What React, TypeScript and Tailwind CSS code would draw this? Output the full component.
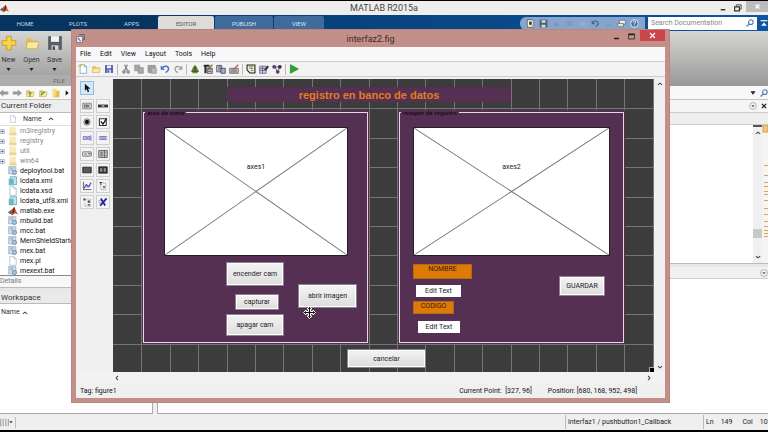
import type { ReactNode } from 'react';

const UI_FONT = "font-['Roboto','Noto_Sans',sans-serif]";

interface GlyphProps {
  children: ReactNode;
  className?: string;
}

function Glyph({ children, className = 'size-[10px]' }: GlyphProps) {
  return (
    <svg className={`shrink-0 ${className}`} viewBox="0 0 14 14" fill="none" aria-hidden="true">
      {children}
    </svg>
  );
}

const folder = (
  <>
    <path d="M2 3h4l1 2h5v7H2z" fill="#e3bd4e" />
    <path d="M3 6h10l-1.500 6H2z" fill="#fbe9a0" stroke="#c9a138" strokeWidth=".6" />
  </>
);
const disk = (
  <>
    <path d="M1.500 1.500h11v11h-11z" fill="#5559a8" />
    <path d="M4 2h6v4H4z" fill="#eef0fa" />
    <path d="M4 8h6v4.500H4z" fill="#c9cdeb" />
    <path d="M5 9h2v3H5z" fill="#3b3f85" />
  </>
);
const page = <path d="M2.500 1h6l3 3v9h-9z M8.500 1v3h3" fill="#fff" stroke="#a5b3bf" />;

type ToolItem = { label: string; icon: ReactNode } | 'sep';

const toolbar: ToolItem[] = [
  {
    label: 'New Figure',
    icon: (
      <>
        <path d="M3 1h6l3 3v9H3z M9 1v3h3" fill="#fff" stroke="#6b9cbd" />
        <path d="M3 0v5M.5 2.500h5" stroke="#e8b434" strokeWidth="1.500" />
      </>
    ),
  },
  { label: 'Open Figure', icon: folder },
  { label: 'Save Figure', icon: disk },
  'sep',
  {
    label: 'Cut',
    icon: (
      <g stroke="#8d8d8d" strokeWidth="2">
        <path d="M9 1L5 9M5 1l4 8" />
        <circle cx="4" cy="11" r="1.600" />
        <circle cx="10" cy="11" r="1.600" />
      </g>
    ),
  },
  {
    label: 'Copy',
    icon: (
      <g fill="#a8a8a8" stroke="#8f8f8f">
        <path d="M1 1.500h7v8H1z" />
        <path d="M6 5h7v8H6z" />
      </g>
    ),
  },
  {
    label: 'Paste',
    icon: (
      <>
        <path d="M1.500 2h10v10h-10z" fill="#a0a0a0" stroke="#8a8a8a" />
        <path d="M6 5.500h7V13H6z" fill="#b8b8b8" stroke="#8f8f8f" />
      </>
    ),
  },
  {
    label: 'Undo',
    icon: (
      <>
        <path d="M3 6c2-4 9-4 9 1 0 3-2 4-4 5" stroke="#4a6fc4" strokeWidth="2" />
        <path d="M1 2v6h6z" fill="#4a6fc4" />
      </>
    ),
  },
  {
    label: 'Redo',
    icon: (
      <>
        <path d="M11 6C9 2 3 3 3 7c0 2 1 4 4 5" stroke="#a0a0a0" strokeWidth="1.800" />
        <path d="M13 2v6H7z" fill="#a0a0a0" />
      </>
    ),
  },
  'sep',
  {
    label: 'Align Objects',
    icon: (
      <>
        <path d="M4 5l3-4 3 4 2 5-2 3H4l-2-3z" fill="#6d8a3a" />
        <path d="M2 9h10v2H2z" fill="#3f5a2b" />
        <path d="M6 4h2v4H6z" fill="#2e4420" />
      </>
    ),
  },
  {
    label: 'Menu Editor',
    icon: (
      <>
        <path d="M1 1h8v3H1zM2 4h3v9H2z" fill="#2d2d2d" />
        <path d="M6 6h7v7H6z" fill="#d8d8d8" stroke="#2d2d2d" />
        <path d="M7 8h5M7 10.500h5" stroke="#444" />
        <path d="M13 1L7 7" stroke="#66663a" strokeWidth="1.800" />
      </>
    ),
  },
  {
    label: 'Tab Order Editor',
    icon: (
      <>
        <path d="M1 2h7v9H1z" fill="#cfd2e2" stroke="#2f3348" />
        <path d="M3 4h4M3 6h4M3 8.500h4" stroke="#333a66" />
        <path d="M7 6h6v7H7z" fill="#a7accb" stroke="#2f3348" />
      </>
    ),
  },
  {
    label: 'Toolbar Editor',
    icon: (
      <>
        <path d="M1 6h12v7H1z" fill="#bdbdbd" stroke="#555" />
        <path d="M3 8.500h8M3 11h8" stroke="#5d5d5d" />
        <path d="M13 1L6 8" stroke="#b2625a" strokeWidth="1.800" />
      </>
    ),
  },
  'sep',
  {
    label: 'Editor',
    icon: (
      <>
        <path d="M1.500 1.500h11v11h-7l-4-4z" fill="#f3f0c8" stroke="#222" strokeWidth="1.500" />
        <path d="M4 4h6M5 6.500h5M7 9h3" stroke="#555" />
      </>
    ),
  },
  {
    label: 'Property Inspector',
    icon: (
      <>
        <path d="M1 3h9v10H1z" fill="#d5d7ea" stroke="#4b4f73" />
        <path d="M1 6h9M1 9h9M5 3v10" stroke="#4b4f73" />
        <path d="M7 8l5-6 2 2-4 5z" fill="#333" />
      </>
    ),
  },
  {
    label: 'Object Browser',
    icon: (
      <>
        <path d="M3 4h8M4 4l4 7 3-7" stroke="#333" />
        <circle cx="3" cy="4" r="2.600" fill="#4d3c73" />
        <circle cx="11" cy="4" r="2.600" fill="#2f2f45" />
        <circle cx="8" cy="11" r="2.600" fill="#6d3a5f" />
      </>
    ),
  },
  'sep',
  { label: 'Run Figure', icon: <path d="M2 1l11 6-11 6z" fill="#26a82c" stroke="#168a1e" /> },
];

const palette: { label: string; icon: ReactNode }[] = [
  {
    label: 'Push Button',
    icon: (
      <>
        <path d="M1 3h12v8H1z" fill="#d4d4d4" stroke="#6b6b6b" />
        <path d="M3.500 5.500h3v3h-3zM8 5v4M10.500 5L8.500 7l2 2" stroke="#444" />
      </>
    ),
  },
  {
    label: 'Slider',
    icon: (
      <>
        <path d="M0 5h14v4H0z" fill="#333" />
        <path d="M5 6h4v2H5z" fill="#bbb" />
      </>
    ),
  },
  {
    label: 'Radio Button',
    icon: (
      <>
        <circle cx="7" cy="7" r="4.500" fill="#ddd" stroke="#555" />
        <circle cx="7" cy="7" r="3" fill="#111" />
      </>
    ),
  },
  {
    label: 'Check Box',
    icon: (
      <>
        <path d="M2 2.500h9.500V12H2z" fill="#fff" stroke="#333" strokeWidth="1.500" />
        <path d="M4 6l3 4 5-8" stroke="#111" strokeWidth="1.800" />
      </>
    ),
  },
  {
    label: 'Edit Text',
    icon: (
      <>
        <path d="M1 4h12v6H1z" fill="#cfccf0" />
        <path d="M2 5h4v4H2zM8 5h3v4H8zM12.500 3v8" stroke="#6a66bd" />
      </>
    ),
  },
  {
    label: 'Static Text',
    icon: (
      <>
        <path d="M1 4h12v6H1z" fill="#cfccf0" />
        <path d="M2 5h10M2 9h10M4 5v4M7 5v4M10 5v4" stroke="#6a66bd" />
      </>
    ),
  },
  {
    label: 'Pop-up Menu',
    icon: (
      <>
        <rect x=".5" y="4" width="13" height="6" rx="1" fill="#e2e2e2" stroke="#555" />
        <path d="M3 7h4M9 6h3l-1.500 2z" stroke="#555" />
      </>
    ),
  },
  {
    label: 'Listbox',
    icon: (
      <>
        <path d="M1 2h12v10H1z" fill="#c4c4c4" stroke="#4a4a4a" />
        <path d="M3 4.500h4M3 7h4M3 9.500h4M9 2v10M11 4v1M11 9v1" stroke="#444" />
      </>
    ),
  },
  {
    label: 'Toggle Button',
    icon: (
      <>
        <path d="M1 3h12v8H1z" fill="#4a4a4a" stroke="#222" />
        <path d="M3 5.500h8M3 8.500h8" stroke="#909090" strokeDasharray="2 1" />
      </>
    ),
  },
  {
    label: 'Table',
    icon: (
      <>
        <path d="M1 2.500h12v9H1z" fill="#333" stroke="#222" />
        <path d="M3 5h3v4H3zM8 5h3v4H8z" fill="#c4c4c4" />
        <path d="M3 7h8" stroke="#333" />
      </>
    ),
  },
  {
    label: 'Axes',
    icon: (
      <>
        <path d="M2 1v11h11" stroke="#333" />
        <path d="M3 10l3-5 3 3 4-6" stroke="#3a3ab8" strokeWidth="1.500" />
        <path d="M4 5l3 4 5-2" stroke="#6c6cd0" />
      </>
    ),
  },
  {
    label: 'Panel',
    icon: (
      <>
        <path d="M2 2h4M4 2v4" stroke="#444" strokeWidth="1.500" />
        <path d="M7 3h4v9H4V7" stroke="#8a8a8a" strokeDasharray="2 1" />
        <path d="M7 7h3v3H7z" fill="#777" />
      </>
    ),
  },
  {
    label: 'Button Group',
    icon: (
      <>
        <path d="M2 2h3v3H2zM8 5h3v3H8zM8 10h3v2H8z" fill="#444" />
        <path d="M6 3h6v10H4V7" stroke="#999" strokeDasharray="2 1" />
      </>
    ),
  },
  {
    label: 'ActiveX Control',
    icon: (
      <>
        <path d="M4 2l6 10M12 2L3 12" stroke="#23239c" strokeWidth="2.500" />
        <path d="M1 5h3M1 8h3" stroke="#777" />
      </>
    ),
  },
];

const script = (
  <>
    <path d="M1 1h10v10H1z" fill="#d5e3ef" stroke="#86a2bb" />
    <path d="M3 3h5M3 5.500h4" stroke="#6e8fb0" />
    <circle cx="9" cy="9" r="3" fill="#a9bfd4" stroke="#64819d" />
  </>
);
const xml = (
  <>
    <path d="M3 1h9v11H3z" fill="#bfe3ea" stroke="#5ca3b4" />
    <path d="M1 4h7v9H1z" fill="#6ab8c8" />
  </>
);
const membrane = (
  <>
    <path d="M0 9l4-3 5-5 1 4 4 7-4-2-4 3z" fill="#c5502a" />
    <path d="M0 9l4-3 2 3-2 2z" fill="#3b6fa5" />
    <path d="M9 1l1 4-3 6-1-2z" fill="#6e1d16" />
  </>
);
const paleFolder = (
  <>
    <path d="M2 1h9v12H2z" fill="#f7eac0" />
    <path d="M2 9h10v4H2z" fill="#eed990" />
  </>
);

const files: { name: string; icon: ReactNode; dir?: boolean }[] = [
  { name: 'm3iregistry', icon: paleFolder, dir: true },
  { name: 'registry', icon: paleFolder, dir: true },
  { name: 'util', icon: paleFolder, dir: true },
  { name: 'win64', icon: paleFolder, dir: true },
  { name: 'deploytool.bat', icon: script },
  { name: 'lcdata.xml', icon: xml },
  { name: 'lcdata.xsd', icon: page },
  { name: 'lcdata_utf8.xml', icon: xml },
  { name: 'matlab.exe', icon: membrane },
  { name: 'mbuild.bat', icon: script },
  { name: 'mcc.bat', icon: script },
  { name: 'MemShieldStarter.bat', icon: script },
  { name: 'mex.bat', icon: script },
  { name: 'mex.pl', icon: page },
  { name: 'mexext.bat', icon: script },
];

const tabs = [
  { name: 'HOME', look: 'w-[50px] bg-[#06365f] text-[#c3d3e2]' },
  { name: 'PLOTS', look: 'w-[54px] bg-[#06365f] text-[#c3d3e2]' },
  { name: 'APPS', look: 'w-[51px] bg-[#06365f] text-[#c3d3e2]' },
  { name: 'EDITOR', look: 'w-[56px] bg-[#dcdcda] text-[#555]' },
  { name: 'PUBLISH', look: 'w-[58px] bg-[#3f6c9c] text-[#dbe6f1]' },
  { name: 'VIEW', look: 'w-[50px] bg-[#3f6c9c] text-[#dbe6f1]' },
];

// Vertical position of each analyzer message in the strip beside the editor
const warnings = [40, 50, 57, 61, 66, 69, 75, 83, 89, 96, 101, 105, 108, 111];

function Chevron({ d }: { d: string }) {
  return (
    <Glyph className="size-[6px]">
      <path d={d} stroke="#444" strokeWidth="2.500" />
    </Glyph>
  );
}

function PanelMenu() {
  return (
    <button aria-label="Panel menu" className="flex">
      <Glyph className="size-[8px]">
        <circle cx="7" cy="7" r="6" fill="#f5f5f5" stroke="#888" />
        <path d="M4 5.500h6L7 9z" fill="#555" />
      </Glyph>
    </button>
  );
}

function TitleBar() {
  return (
    <header className="grid h-[15px] grid-cols-[1fr_auto_1fr] items-center border-t border-black bg-[#efeeec]">
      <Glyph className="size-[9px]">{membrane}</Glyph>
      <h1 className="text-[9px] leading-[14px] text-[#444]">MATLAB R2015a</h1>
      <div className="flex h-full items-center justify-end">
        <button aria-label="Minimize" className="flex w-[14px] justify-center">
          <Glyph className="size-[8px]">
            <path d="M3 10h8" stroke="#333" strokeWidth="2.500" />
          </Glyph>
        </button>
        <button aria-label="Restore" className="flex w-[16px] justify-center">
          <Glyph className="size-[8px]">
            <path d="M4 4V1.500h8.500V9H10" stroke="#333" strokeWidth="1.500" />
            <path d="M1 5h8.500v7H1z" stroke="#333" strokeWidth="2" />
          </Glyph>
        </button>
        <button aria-label="Close" className="flex h-[11px] w-[22px] items-center justify-center self-start bg-[#bcbcbc]">
          <Glyph className="size-[7px]">
            <path d="M3 3l8 8M11 3l-8 8" stroke="#fff" strokeWidth="2.500" />
          </Glyph>
        </button>
      </div>
    </header>
  );
}

function SearchIcon() {
  return (
    <Glyph className="size-[8px]">
      <circle cx="8.500" cy="5.500" r="4" stroke="#4578b0" strokeWidth="1.800" />
      <path d="M6 8.500L1 13" stroke="#4578b0" strokeWidth="2.200" />
    </Glyph>
  );
}

function TabStrip() {
  return (
    <nav className="flex h-[16px] items-end bg-linear-to-r from-[#053360] to-[#0d55a0]">
      {tabs.map((tab) => (
        <button
          key={tab.name}
          className={`mr-px h-[15px] shrink-0 rounded-t-xs text-center text-[6px] leading-[15px] ${tab.look}`}
        >
          {tab.name}
        </button>
      ))}
      <div className="ml-auto flex h-[13px] shrink-0 items-center gap-[4px] self-center rounded-l-md bg-[#87a5cc] px-[6px]">
        <Glyph className="size-[9px]">
          <path d="M2 1h8l2 3v9H2z" fill="#f1efe3" stroke="#35465c" />
          <path d="M5 4h4v5H5z" fill="#31363d" />
          <path d="M8 9l5 3" stroke="#c9a538" strokeWidth="2" />
        </Glyph>
        <Glyph className="size-[9px]">
          <path d="M1 1h12v12H1z" fill="#53606e" />
          <path d="M4 2h6v4H4zM4 9h6v4H4z" fill="#d6dce2" />
        </Glyph>
        <Glyph className="size-[9px]">
          <path d="M7 3l4 8H3z" fill="#7793b8" />
        </Glyph>
        <Glyph className="size-[9px]">
          <path d="M3 3h8v8H3z" fill="#7d9abf" />
        </Glyph>
        <Glyph className="size-[9px]">
          <path d="M3 4h8v7H3z" fill="#93aecf" />
        </Glyph>
        <Glyph className="size-[9px]">
          <path d="M3 5c3-4 9-1 8 3l-3 4" stroke="#41699d" strokeWidth="2" />
          <path d="M1 2v6h6z" fill="#41699d" />
        </Glyph>
        <Glyph className="size-[9px]">
          <path d="M4 10h7" stroke="#7793b8" strokeWidth="2" />
        </Glyph>
        <Glyph className="size-[9px]">
          <path d="M4 2h9v6H4z" fill="#f2f2ea" stroke="#55606c" />
          <path d="M1 7h9v5H1z" fill="#e8e4cc" stroke="#55606c" />
        </Glyph>
        <Glyph className="size-[9px]">
          <circle cx="7" cy="7" r="6" fill="#4472ae" stroke="#e6eef7" strokeWidth="1.500" />
          <path d="M5 5.500c0-3 4-2.500 4-.5C9 6.500 7 6.500 7 8.500M7 10v1" stroke="#fff" strokeWidth="1.500" />
        </Glyph>
      </div>
      <label className="ml-[3px] flex h-[13px] w-[109px] shrink-0 items-center self-center bg-white px-[3px]">
        <input
          type="search"
          aria-label="Search Documentation"
          placeholder="Search Documentation"
          className="min-w-0 flex-1 text-[7px] leading-[13px] outline-none placeholder:text-[#888]"
        />
        <SearchIcon />
      </label>
      <button aria-label="Collapse toolstrip" className="flex h-full w-[11px] items-center justify-end">
        <Glyph className="size-[8px]">
          <path d="M1 3h12" stroke="#fff" strokeWidth="2" />
          <path d="M2 12l5-6 5 6z" fill="#fff" />
        </Glyph>
      </button>
    </nav>
  );
}

function RibbonButton({ label, children }: { label: string; children: ReactNode }) {
  return (
    <button className="flex w-[23px] flex-col items-center text-[7px] leading-[10px] text-[#333]">
      <Glyph className="mb-[4px] size-[16px]">{children}</Glyph>
      {label}
      <Glyph className="mt-[2px] size-[5px]">
        <path d="M1 3h12l-6 8z" fill="#222" />
      </Glyph>
    </button>
  );
}

function Ribbon() {
  return (
    <section className="flex h-[55px] flex-col bg-linear-to-b from-[#d6d6d4] to-[#989898]">
      <div className="-ml-[3px] flex flex-1 pt-[4px]">
        <RibbonButton label="New">
          <path d="M5 1h4v4h4v4H9v4H5V9H1V5h4z" fill="#f6d549" stroke="#c79a22" strokeWidth=".8" />
        </RibbonButton>
        <RibbonButton label="Open">{folder}</RibbonButton>
        <RibbonButton label="Save">
          <path d="M1 1h12v12H1z" fill="#5a5f66" />
          <path d="M3.500 1h7v5h-7z" fill="#f3f3f3" />
          <path d="M4 9h6v4H4z" fill="#d5d5d5" />
          <path d="M5 10h2v3H5z" fill="#444" />
        </RibbonButton>
      </div>
      <p className="h-[11px] w-[118px] bg-[#acacac] text-center text-[6px] leading-[11px] text-[#666]">FILE</p>
    </section>
  );
}

function AddressBar() {
  return (
    <div className="flex h-[14px] items-center gap-[3px] border-b border-[#c4c4c4] bg-[#f8f8f8]">
      <div className="-ml-px flex items-center gap-[3px]">
        <Glyph>
          <path d="M0 7l6-5v3h7v4H6v3z" fill="#999" />
        </Glyph>
        <Glyph>
          <path d="M14 7L8 2v3H1v4h7v3z" fill="#999" />
        </Glyph>
        <Glyph>
          {folder}
          <path d="M7 12V6M5 8l2-2 2 2" stroke="#3b7a35" strokeWidth="1.300" />
        </Glyph>
        <Glyph>
          {folder}
          <path d="M4 10l5-5" stroke="#4b9a45" strokeWidth="2" />
        </Glyph>
        <Glyph>
          <path d="M2 1h6v12H2z" fill="#f5dd85" />
          <path d="M8 4h4v9H5z" fill="#e4bf4f" />
        </Glyph>
        <Glyph className="size-[6px]">
          <path d="M4 1l7 6-7 6z" fill="#111" />
        </Glyph>
      </div>
      <div className="ml-auto flex items-center gap-[4px]">
        <Glyph className="size-[6px]">
          <path d="M1 3h12l-6 8z" fill="#222" />
        </Glyph>
        <SearchIcon />
      </div>
    </div>
  );
}

function Sidebar() {
  return (
    <aside className="flex w-[153px] shrink-0 flex-col border-r border-b border-[#aaa] bg-white">
      <h2 className="h-[13px] border-b border-[#bbb] bg-[#eeeeee] pl-[1px] text-[8px] leading-[12px] text-[#333]">
        Current Folder
      </h2>
      <div className="flex h-[13px] shrink-0 items-center gap-[6px] border-b border-[#ddd] pl-[9px] text-[7px] text-[#333]">
        <Glyph className="size-[8px]">{page}</Glyph>
        <span>Name</span>
        <Chevron d="M2 9l5-4 5 4" />
      </div>
      <ul className="h-[149px] shrink-0 overflow-hidden">
        {files.map((file) => (
          <li key={file.name} className="flex h-[10px] items-center text-[7px] leading-[10px]">
            <span className="flex w-[8px]">
              {file.dir && (
                <Glyph className="size-[5px]">
                  <path d="M1 1h11v12H1z" stroke="#8aa0b8" strokeWidth="2" />
                  <path d="M3 7h7M7 4v6" stroke="#446" strokeWidth="2" />
                </Glyph>
              )}
            </span>
            <Glyph className="mr-[2px] size-[10px]">{file.icon}</Glyph>
            <span className={file.dir ? 'text-[#888]' : 'whitespace-nowrap text-[#111]'}>{file.name}</span>
          </li>
        ))}
      </ul>
      <h2 className="h-[12px] border-t border-[#888] bg-[#f7f7f7] text-[7px] leading-[11px] text-[#777]">Details</h2>
      <div className="h-[4px] border-t border-[#bbb] bg-[#e6e6e6]" />
      <h2 className="h-[13px] border-b border-[#bbb] bg-[#eaeaea] pl-[1px] text-[8px] leading-[13px] text-[#333]">
        Workspace
      </h2>
      <div className="flex h-[17px] items-center gap-[2px] pl-[1px] text-[7px] text-[#333]">
        <span>Name</span>
        <Chevron d="M2 9l5-4 5 4" />
      </div>
    </aside>
  );
}

function EditorArea() {
  return (
    <section className="flex min-w-0 flex-1 flex-col border-b border-l border-[#aaa] bg-white">
      <div className="flex h-[13px] items-center justify-end gap-[4px] border-b border-[#ccc] bg-[#f5f5f5] pr-[1px]">
        <PanelMenu />
        <button aria-label="Close editor" className="flex">
          <Glyph className="size-[6px]">
            <path d="M2 2l10 10M12 2L2 12" stroke="#222" strokeWidth="3" />
          </Glyph>
        </button>
      </div>
      <div className="h-[12px] border-b border-[#ccc] bg-[#eeeeee]" />
      <div className="flex h-[138px] justify-end">
        <div className="flex w-[9px] flex-col items-center border-t-2 border-[#555] bg-[#f0f0f0] py-[3px]">
          <Chevron d="M2 9l5-4 5 4" />
          <div className="mt-auto mb-[16px] h-[9px] w-full bg-[#c9c9c9]" />
          <Chevron d="M2 5l5 4 5-4" />
        </div>
        <svg className="h-full w-[6px] bg-[#f4f4f4]" aria-hidden="true">
          <rect x="1" y="0" width="5" height="7" fill="#f1c583" stroke="#d79c45" />
          {warnings.map((y) => (
            <rect key={y} x="2" y={y} width="4" height="1" fill="#e3a24c" />
          ))}
        </svg>
      </div>
      <div className="h-[4px] border-t border-[#bbb] bg-[#e8e8e8]" />
      <div className="flex h-[12px] items-center justify-end border-b border-[#ccc] bg-[#f1f1f1]">
        <PanelMenu />
      </div>
    </section>
  );
}

function StatusBar() {
  return (
    <footer className="flex h-[18px] shrink-0 items-center border-b-2 border-black bg-[#efefef] text-[7px] leading-[14px] text-[#222]">
      <Glyph className="size-[9px]">
        <path d="M1 1v12M5 1v12M9 1v12M13 1v12" stroke="#aaa" strokeWidth="2" />
      </Glyph>
      <span className="flex h-[11px] items-center border-r border-[#bbb] pr-[2px]">
        <Glyph className="size-[4px]">
          <path d="M1 4h12l-6 7z" fill="#333" />
        </Glyph>
      </span>
      <div className="ml-auto w-[138px] border-l border-[#bbb] pl-[2px]">interfaz1 / pushbutton1_Callback</div>
      <div className="flex w-[65px] gap-[7px] border-l border-[#bbb] pl-[2px]">
        <span>Ln</span>
        <span>149</span>
        <span className="ml-[3px]">Col</span>
        <span>10</span>
      </div>
    </footer>
  );
}

function Axes({ name, className }: { name: string; className: string }) {
  return (
    <div className={`absolute border border-[#222] bg-white ${className}`}>
      <svg className="size-full" viewBox="0 0 100 100" preserveAspectRatio="none" aria-hidden="true">
        <path d="M0 0L100 100M100 0L0 100" stroke="#777" vectorEffect="non-scaling-stroke" />
      </svg>
      <span className="absolute inset-x-0 top-[34px] text-center text-[7px] leading-[10px] text-[#222]">{name}</span>
    </div>
  );
}

function GuiButton({ label, className }: { label: string; className: string }) {
  return (
    <button
      className={`absolute border border-white bg-linear-to-b from-[#f3f3f3] to-[#dedede] text-center text-[7px] leading-[10px] text-[#222] outline outline-[#8d8090] ${className}`}
    >
      {label}
    </button>
  );
}

function Panel({ title, className, children }: { title: string; className: string; children: ReactNode }) {
  return (
    <section className={`absolute h-[234px] w-[227px] bg-[#553052] p-px pt-[2px] ${className}`}>
      <div className="h-full border border-[#e6d8e4]" />
      <h3 className="absolute top-0 left-[3px] bg-[#553052] px-[2px] font-['Liberation_Sans',sans-serif] text-[6px] leading-[7px] font-bold text-[#1d0a1d]">
        {title}
      </h3>
      {children}
    </section>
  );
}

const columns = Array.from({ length: 19 }, (_, i) => Math.round((i + 1) * 28.4));
const rows = Array.from({ length: 9 }, (_, i) => Math.round((i + 1) * 29.4));

function Canvas() {
  return (
    <main className="relative min-w-0 flex-1 overflow-hidden bg-[#3c3c3c]">
      <svg className="absolute size-full" aria-hidden="true">
        {columns.map((x) => (
          <rect key={x} x={x} y="0" width="1" height="100%" fill="#757575" />
        ))}
        {rows.map((y) => (
          <rect key={y} x="0" y={y} width="100%" height="1" fill="#757575" />
        ))}
      </svg>
      <h2 className="absolute top-[8px] left-[114px] h-[15px] w-[284px] bg-[#553052] text-center font-['Liberation_Sans',sans-serif] text-[11px] leading-[16px] font-bold text-[#e27d1c]">
        registro en banco de datos
      </h2>

      <Panel title="area de toma" className="top-[31px] left-[29px]">
        <Axes name="axes1" className="top-[17px] left-[22px] h-[129px] w-[184px]" />
        <GuiButton label="encender cam" className="top-[153px] left-[85px] h-[22px] w-[56px]" />
        <GuiButton label="capturar" className="top-[185px] left-[94px] h-[14px] w-[42px]" />
        <GuiButton label="apagar cam" className="top-[205px] left-[85px] h-[20px] w-[56px]" />
        <GuiButton label="abrir imagen" className="top-[175px] left-[157px] h-[22px] w-[57px]" />
      </Panel>

      <Panel title="imagen de registro" className="top-[31px] left-[285px]">
        <Axes name="axes2" className="top-[17px] left-[15px] h-[129px] w-[197px]" />
        <label
          htmlFor="nombre"
          className="absolute top-[154px] left-[15px] h-[15px] w-[59px] border border-[#b5661a] bg-[#de7a06] text-center text-[7px] leading-[9px] text-[#3a1c08]"
        >
          NOMBRE
        </label>
        <input
          id="nombre"
          defaultValue="Edit Text"
          className="absolute top-[175px] left-[18px] h-[12px] w-[45px] bg-white text-center text-[7px] text-[#222] outline-none"
        />
        <label
          htmlFor="codigo"
          className="absolute top-[191px] left-[15px] h-[13px] w-[41px] border border-[#b5661a] bg-[#de7a06] text-center text-[7px] leading-[9px] text-[#3a1c08]"
        >
          CODIGO
        </label>
        <input
          id="codigo"
          defaultValue="Edit Text"
          className="absolute top-[211px] left-[20px] h-[12px] w-[42px] bg-white text-center text-[7px] text-[#222] outline-none"
        />
        <GuiButton label="GUARDAR" className="top-[167px] left-[162px] h-[18px] w-[44px]" />
      </Panel>

      <GuiButton label="cancelar" className="top-[271px] left-[235px] h-[17px] w-[77px]" />
      <svg className="absolute top-[227px] left-[190px] size-[13px]" viewBox="0 0 26 26" aria-hidden="true">
        <path
          d="M13 1l5 5h-3v5h5V8l5 5-5 5v-3h-5v5h3l-5 5-5-5h3v-5H6v3l-5-5 5-5v3h5V6H8z"
          fill="#111"
          stroke="#fff"
          strokeWidth="2"
        />
      </svg>
      <span className="absolute right-0 bottom-0 size-[5px] border-t border-l border-[#aaa] bg-black" />
    </main>
  );
}

function FigureWindow() {
  return (
    <div className="absolute top-[29px] right-[98px] bottom-[29px] left-[71px] flex flex-col border border-[#b88680] bg-[#c48f88] px-[4px] pb-[4px] text-[7px] text-[#111]">
      <div className="grid h-[17px] shrink-0 grid-cols-[1fr_auto_1fr] items-center">
        <Glyph className="size-[9px]">
          <path d="M1 4h9v9H1z" fill="#f5f5f5" stroke="#555" />
          <path d="M5 1h8v8h-2" stroke="#4a5a80" strokeWidth="1.500" />
          <path d="M3 6l4 5" stroke="#4b76b8" strokeWidth="2" />
        </Glyph>
        <h2 className="text-[9px] leading-[16px] text-[#3d2b29]">interfaz2.fig</h2>
        <div className="flex items-start justify-end self-start">
          <button aria-label="Minimize figure" className="flex h-[12px] w-[14px] items-center justify-center">
            <Glyph className="size-[7px]">
              <path d="M2 11h10" stroke="#222" strokeWidth="3" />
            </Glyph>
          </button>
          <button aria-label="Maximize figure" className="flex h-[12px] w-[17px] items-center justify-center">
            <Glyph className="size-[7px]">
              <path d="M1 2h12v10H1z" stroke="#222" strokeWidth="1.500" />
              <path d="M1 3h12" stroke="#222" strokeWidth="3" />
            </Glyph>
          </button>
          <button aria-label="Close figure" className="flex h-[11px] w-[25px] items-center justify-center bg-[#c9474b]">
            <Glyph className="size-[7px]">
              <path d="M2 2l10 10M12 2L2 12" stroke="#fff" strokeWidth="2.500" />
            </Glyph>
          </button>
        </div>
      </div>

      <nav className="flex h-[15px] shrink-0 items-center gap-[9px] border-b border-[#ccc] bg-[#f8f7f9] pl-[4px] leading-[14px]">
        {['File', 'Edit', 'View', 'Layout', 'Tools', 'Help'].map((menu) => (
          <button key={menu}>{menu}</button>
        ))}
      </nav>
      <div className="flex h-[15px] shrink-0 items-center gap-[3px] border-b border-[#ccc] bg-[#f3f3f3] pl-[2px]">
        {toolbar.map((item, i) =>
          item === 'sep' ? (
            <span key={i} className="h-[11px] w-px bg-[#bbb]" />
          ) : (
            <button key={item.label} aria-label={item.label} className="flex">
              <Glyph>{item.icon}</Glyph>
            </button>
          ),
        )}
      </div>

      <div className="flex min-h-0 flex-1 bg-[#f0f0f0] pt-[2px]">
        <div className="w-[37px] shrink-0 pt-[2px] pl-[4px]">
          <button
            aria-label="Select"
            className="flex size-[14px] items-center justify-center border border-[#8fbfe4] bg-[#d5e8f8]"
          >
            <Glyph>
              <path d="M4 1v10l2.500-2.500L8 13l2-1-1.500-4H12z" fill="#111" />
            </Glyph>
          </button>
          <div className="mt-[4px] grid grid-cols-[14px_14px] gap-[2px]">
            {palette.map((item) => (
              <button
                key={item.label}
                aria-label={item.label}
                className="flex size-[14px] items-center justify-center border border-[#d0d0d0] bg-[#f4f4f4]"
              >
                <Glyph>{item.icon}</Glyph>
              </button>
            ))}
          </div>
        </div>
        <Canvas />
        <div className="flex w-[11px] flex-col items-center justify-between py-[2px]">
          <Chevron d="M2 9l5-4 5 4" />
          <Chevron d="M2 5l5 4 5-4" />
        </div>
      </div>
      <div className="flex h-[11px] shrink-0 items-center justify-between bg-[#f2f2f2] pr-[13px] pl-[38px]">
        <Chevron d="M9 2L5 7l4 5" />
        <Chevron d="M5 2l4 5-4 5" />
      </div>
      <footer className="flex h-[15px] shrink-0 items-center bg-[#f0f0f0] pr-[28px] pl-[4px] leading-[14px]">
        <span>Tag: figure1</span>
        <span className="ml-auto">Current Point:&nbsp; [327, 96]</span>
        <span className="ml-[16px]">Position: [680, 168, 952, 498]</span>
      </footer>
    </div>
  );
}

export default function App() {
  return (
    <div className={`relative flex min-h-screen flex-col overflow-hidden bg-[#efefef] ${UI_FONT}`}>
      <TitleBar />
      <TabStrip />
      <Ribbon />
      <AddressBar />
      <div className="flex flex-1 gap-[4px]">
        <Sidebar />
        <EditorArea />
      </div>
      <StatusBar />
      <FigureWindow />
    </div>
  );
}
